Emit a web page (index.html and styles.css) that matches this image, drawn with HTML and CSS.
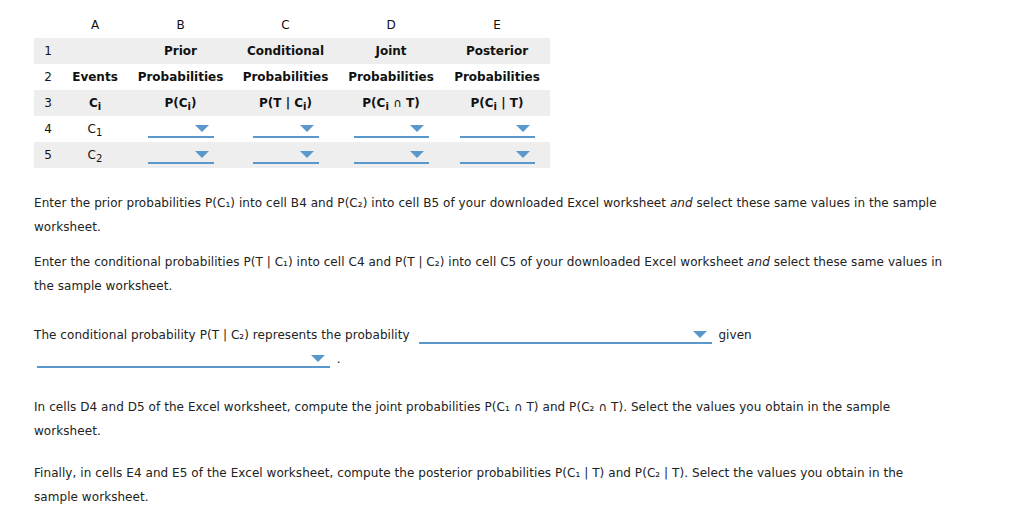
FILE: index.html
```html
<!DOCTYPE html>
<html>
<head>
<meta charset="utf-8">
<link rel="stylesheet" href="styles.css">
</head>
<body>
<main class="page">
  <table class="sheet">
    <colgroup>
      <col class="c-rn"><col class="c-a"><col class="c-b"><col class="c-c"><col class="c-d"><col class="c-e">
    </colgroup>
    <thead>
      <tr class="letters"><th></th><th>A</th><th>B</th><th>C</th><th>D</th><th>E</th></tr>
    </thead>
    <tbody>
      <tr class="shade">
        <td class="rn">1</td><td></td><td class="b">Prior</td><td class="b">Conditional</td><td class="b">Joint</td><td class="b">Posterior</td>
      </tr>
      <tr>
        <td class="rn">2</td><td class="b">Events</td><td class="b">Probabilities</td><td class="b">Probabilities</td><td class="b">Probabilities</td><td class="b">Probabilities</td>
      </tr>
      <tr class="shade">
        <td class="rn">3</td><td class="b">C<sub>i</sub></td><td class="b">P(C<sub>i</sub>)</td><td class="b">P(T | C<sub>i</sub>)</td><td class="b">P(C<sub>i</sub> <span class="cap">∩</span> T)</td><td class="b">P(C<sub>i</sub> | T)</td>
      </tr>
      <tr>
        <td class="rn">4</td><td>C<sub>1</sub></td>
        <td class="sel"><span class="dd w66"></span></td>
        <td class="sel"><span class="dd w66"></span></td>
        <td class="sel"><span class="dd w75"></span></td>
        <td class="sel"><span class="dd w75"></span></td>
      </tr>
      <tr class="shade">
        <td class="rn">5</td><td>C<sub>2</sub></td>
        <td class="sel"><span class="dd w66"></span></td>
        <td class="sel"><span class="dd w66"></span></td>
        <td class="sel"><span class="dd w75"></span></td>
        <td class="sel"><span class="dd w75"></span></td>
      </tr>
    </tbody>
  </table>

  <p class="p1">Enter the prior probabilities P(C₁) into cell B4 and P(C₂) into cell B5 of your downloaded Excel worksheet <i>and</i> select these same values in the sample worksheet.</p>
  <p class="p2">Enter the conditional probabilities P(T | C₁) into cell C4 and P(T | C₂) into cell C5 of your downloaded Excel worksheet <i>and</i> select these same values in the sample worksheet.</p>
  <p class="p3">The conditional probability P(T | C₂) represents the probability <span class="dd inl first w293"></span> given <span class="dd inl w293"></span> .</p>
  <p class="p4">In cells D4 and D5 of the Excel worksheet, compute the joint probabilities P(C₁ ∩ T) and P(C₂ ∩ T). Select the values you obtain in the sample worksheet.</p>
  <p class="p5">Finally, in cells E4 and E5 of the Excel worksheet, compute the posterior probabilities P(C₁ | T) and P(C₂ | T). Select the values you obtain in the sample worksheet.</p>
</main>
</body>
</html>
```

FILE: styles.css
```css
html, body {
  margin: 0;
  padding: 0;
  background: #ffffff;
}

body {
  font-family: "DejaVu Sans", Verdana, sans-serif;
  font-size: 12px;
  color: #222222;
}

.page {
  padding: 12px 66px 0 34px;
}

.sheet {
  border-collapse: collapse;
  border-spacing: 0;
  table-layout: fixed;
  width: 516px;
  color: #111111;
}

.c-rn { width: 28px; }
.c-a { width: 66px; }
.c-b { width: 105px; }
.c-c { width: 105px; }
.c-d { width: 106px; }
.c-e { width: 106px; }

.sheet tr {
  height: 26px;
}

.sheet th,
.sheet td {
  padding: 0;
  text-align: center;
  vertical-align: middle;
  font-weight: normal;
  white-space: nowrap;
  line-height: 14px;
}

.sheet .shade td {
  background: #eeeeee;
}

.sheet td.b {
  font-weight: bold;
}

.sheet .cap {
  font-weight: normal;
}

.sheet sub {
  font-size: 10px;
  line-height: 0;
  vertical-align: -3px;
}

.sheet td.sel {
  vertical-align: bottom;
  padding-bottom: 4px;
}

.dd {
  position: relative;
  box-sizing: border-box;
  height: 20px;
  border-bottom: 2px solid #5a97ca;
}

.sheet .dd {
  display: block;
  margin: 0 auto;
}

.dd::after {
  content: "";
  position: absolute;
  right: 5px;
  top: 7px;
  width: 0;
  height: 0;
  border-left: 7px solid transparent;
  border-right: 7px solid transparent;
  border-top: 7px solid #5a97ca;
}

.w66 { width: 66px; }
.w75 { width: 75px; }
.w293 { width: 293px; }

.dd.inl {
  display: inline-block;
  vertical-align: -5px;
  margin: 0 3px;
}

.dd.inl.first {
  margin-left: 5px;
}

p {
  margin: 0;
  line-height: 24px;
  letter-spacing: 0.06px;
}

.p1 { margin-top: 23px; }
.p2 { margin-top: 11px; }
.p3 { margin-top: 25px; }
.p4 { margin-top: 24px; }
.p5 { margin-top: 18px; }
```
